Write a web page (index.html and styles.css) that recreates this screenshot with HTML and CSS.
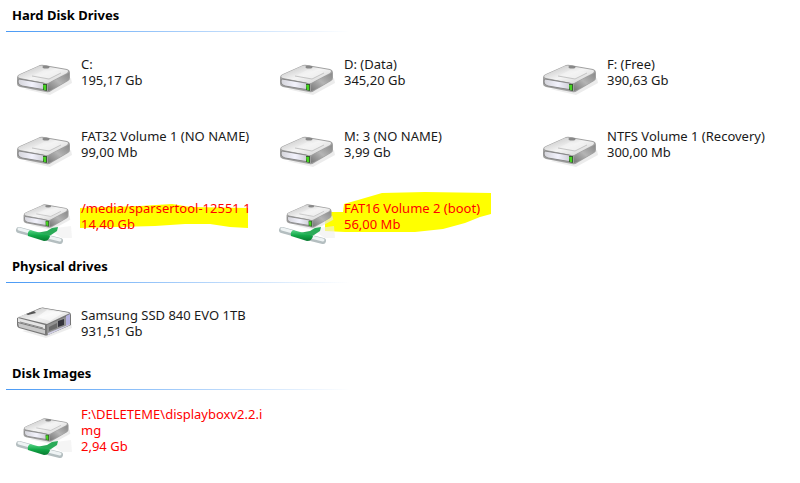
FILE: index.html
```html
<!DOCTYPE html>
<html lang="en">
<head>
  <meta charset="UTF-8">
  <meta name="viewport" content="width=device-width, initial-scale=1">
  <title>Drives</title>
  <link rel="stylesheet" href="styles.css">
</head>
<body>
  <!-- Shared drive icons -->
  <svg class="icon-defs" width="0" height="0" aria-hidden="true">
    <defs>
      <linearGradient id="top" x1="0" y1="0" x2="1" y2="1">
        <stop offset="0" stop-color="#bcbcbc"/>
        <stop offset="0.5" stop-color="#f4f4f4"/>
        <stop offset="1" stop-color="#cfcfcf"/>
      </linearGradient>
      <linearGradient id="side" x1="0" y1="1" x2="1" y2="0">
        <stop offset="0" stop-color="#777"/>
        <stop offset="0.5" stop-color="#b4b4b4"/>
        <stop offset="1" stop-color="#8a8a8a"/>
      </linearGradient>
      <linearGradient id="front" x1="0" y1="0" x2="1" y2="0">
        <stop offset="0" stop-color="#d4d4da"/>
        <stop offset="0.5" stop-color="#f2f2fc"/>
        <stop offset="1" stop-color="#c8c8d0"/>
      </linearGradient>
      <linearGradient id="cable" x1="0" y1="0" x2="0" y2="1">
        <stop offset="0" stop-color="#58d588"/>
        <stop offset="0.5" stop-color="#12a848"/>
        <stop offset="1" stop-color="#087a30"/>
      </linearGradient>
      <symbol id="drive" viewBox="0 0 60 60">
        <path d="M10 47 L36 53 L58 41 L57 36 L34 48Z" fill="#e4e4e4" opacity="0.7"/>
        <path d="M3 36 Q3 33 6 32 L24 24 Q27 22 30 23 L53 27 Q56 28 56 31 L56 36 Q56 38 54 39 L37 49 Q35 51 32 50 L6 45 Q3 44 3 42Z" fill="#a0a0a0"/>
        <path d="M5 33 L25 24 Q27 23 30 24 L53 28 Q55 29 53 31 L36 40 Q33 42 31 41 L6 36 Q3 35 5 33Z" fill="url(#top)"/>
        <path d="M20 33 L30 28 L47 30 L36 37Z" fill="#f4f4f4" opacity="0.6"/>
        <path d="M18 34 L35 37 L47 31" fill="none" stroke="#c4c4c4"/>
        <ellipse cx="32" cy="25" rx="3.5" ry="1.5" fill="#888"/>
        <path d="M34 43 Q35 41 37 40 L55 31 L55 36 Q55 38 53 39 L37 48 L34 49Z" fill="url(#side)"/>
        <path d="M5 37 L29 41 Q32 42 32 44 L32 48 L8 44 Q4 43 4 40 Q4 37 5 37Z" fill="url(#front)" stroke="#868686"/>
        <path d="M29 42 L33 42 L33 49 L29 48Z" fill="#36602e"/>
        <path d="M29 43 L32 43 L32 48 L30 48Z" fill="#46d422"/>
      </symbol>
      <symbol id="network" viewBox="0 -2 60 60">
        <path d="M34 41 L57 38 L58 50 L48 50Z" fill="#eee" opacity="0.6"/>
        <use href="#drive" x="7" y="-3" width="51" height="51"/>
        <path d="M5 42 L16 45" stroke="#b4bec0" stroke-width="6" stroke-linecap="round"/>
        <path d="M5 41 L16 44" stroke="#eef3f4" stroke-width="3" stroke-linecap="round"/>
        <path d="M34 50 L46 53" stroke="#b4bec0" stroke-width="6" stroke-linecap="round"/>
        <path d="M34 49 L46 52" stroke="#eef3f4" stroke-width="3" stroke-linecap="round"/>
        <path d="M22 45 L33 43 L38 40 L44 39 L43 43 L37 47 L33 49Z" fill="#2aab58"/>
        <path d="M16 42 Q13 44 14 48 L30 53 Q35 53 36 48 L27 45Z" fill="url(#cable)"/>
      </symbol>
      <symbol id="physical" viewBox="0 8 60 60">
        <path d="M8 46 L32 53 L58 43 L57 37Z" fill="#e4e4e4" opacity="0.7"/>
        <path d="M3 33 L26 23 Q29 22 31 23 L55 27 Q57 28 57 30 L57 40 L34 50 Q32 51 30 50 L5 43 Q3 42 3 40Z" fill="#777"/>
        <path d="M4 32 L28 23 L56 28 L33 39Z" fill="url(#top)"/>
        <path d="M23 32 L33 25 L49 28 L36 36Z" fill="#fff" opacity="0.6"/>
        <path d="M12 29 L20 26 L22 28 L14 30Z" fill="#555"/>
        <path d="M4 33 L31 40 L31 44 L4 37Z" fill="#e4e4e4"/>
        <path d="M4 38 L31 45 L31 49 L5 42Z" fill="#c8c8c8"/>
        <path d="M6 37 L29 43" stroke="#888" fill="none"/>
        <path d="M33 40 L56 30 L56 40 L33 50Z" fill="#929292"/>
        <path d="M35 42 L43 38 L43 43 L35 46Z" fill="#6a6a6a"/>
        <path d="M44 36 L50 34 L50 40 L44 42Z" fill="#34343c"/>
        <path d="M52 31 L56 29 L56 39 L52 41Z" fill="#b4b1e0"/>
        <path d="M34 48 L56 39 L56 40 L34 50Z" fill="#d4d2e8"/>
      </symbol>
    </defs>
  </svg>

  <main class="drives">
    <section>
      <h2>Hard Disk Drives</h2>
      <ul class="drive-list">
        <li class="drive">
          <svg class="icon" aria-hidden="true"><use href="#drive"/></svg>
          <div class="info">C:<br>195,17 Gb</div>
        </li>
        <li class="drive">
          <svg class="icon" aria-hidden="true"><use href="#drive"/></svg>
          <div class="info">D: (Data)<br>345,20 Gb</div>
        </li>
        <li class="drive">
          <svg class="icon" aria-hidden="true"><use href="#drive"/></svg>
          <div class="info">F: (Free)<br>390,63 Gb</div>
        </li>
        <li class="drive">
          <svg class="icon" aria-hidden="true"><use href="#drive"/></svg>
          <div class="info">FAT32 Volume 1 (NO NAME)<br>99,00 Mb</div>
        </li>
        <li class="drive">
          <svg class="icon" aria-hidden="true"><use href="#drive"/></svg>
          <div class="info">M: 3 (NO NAME)<br>3,99 Gb</div>
        </li>
        <li class="drive">
          <svg class="icon" aria-hidden="true"><use href="#drive"/></svg>
          <div class="info">NTFS Volume 1 (Recovery)<br>300,00 Mb</div>
        </li>
        <li class="drive mounted">
          <svg class="marker marker-media" viewBox="0 0 168 26" aria-hidden="true"><path d="M0 4 L60 2 L92 0 L110 3 L168 4 L168 24 L150 23 L130 20 L105 20 L75 22 L0 24Z"/></svg>
          <svg class="icon" aria-hidden="true"><use href="#network"/></svg>
          <div class="info">/media/sparsertool-12551 1<br>14,40 Gb</div>
        </li>
        <li class="drive mounted">
          <svg class="marker marker-boot" viewBox="0 0 166 42" aria-hidden="true"><path d="M0 20 L18 20 L19 12 L33 8 L57 1 L100 0 L166 1 L166 22 L155 25 L140 31 L118 37 L90 40 L20 40 L0 39Z"/></svg>
          <svg class="icon" aria-hidden="true"><use href="#network"/></svg>
          <div class="info">FAT16 Volume 2 (boot)<br>56,00 Mb</div>
        </li>
      </ul>
    </section>

    <section>
      <h2>Physical drives</h2>
      <ul class="drive-list">
        <li class="drive">
          <svg class="icon" aria-hidden="true"><use href="#physical"/></svg>
          <div class="info">Samsung SSD 840 EVO 1TB<br>931,51 Gb</div>
        </li>
      </ul>
    </section>

    <section>
      <h2>Disk Images</h2>
      <ul class="drive-list">
        <li class="drive mounted">
          <svg class="icon" aria-hidden="true"><use href="#network"/></svg>
          <div class="info">F:\DELETEME\displayboxv2.2.img<br>2,94 Gb</div>
        </li>
      </ul>
    </section>
  </main>
</body>
</html>
```

FILE: styles.css
```css
body { margin: 0; background: #fff; color: #1a1a1a; font: 13px/16px Tahoma, "Noto Sans", sans-serif; }
.icon-defs { position: absolute; }
.drives { padding: 7px 5px 0 6px; }
.drives h2 { margin: 0; padding: 0 6px 9px; font-size: 13px; line-height: 16px; color: #000; background: linear-gradient(to right, #4a9af5, #fff) no-repeat left bottom / 344px 1px; }
.drive-list { list-style: none; margin: 0; padding: 10px 0 0; display: grid; grid-template-columns: repeat(3, 1fr); }
.drive { position: relative; display: flex; align-items: flex-start; gap: 7px; height: 72px; padding: 0 4px 0 8px; box-sizing: border-box; }
.icon { flex: none; width: 60px; height: 60px; position: relative; }
.info { position: relative; align-self: center; padding-bottom: 12px; min-width: 0; word-break: break-word; }
.mounted .info { color: #f00; word-break: break-all; }

/* highlighter strokes behind the text */
.marker { position: absolute; fill: #ff0; }
.marker-media { left: 74px; top: 18px; width: 168px; height: 26px; }
.marker-boot { left: 56px; top: 6px; width: 166px; height: 42px; }
```
